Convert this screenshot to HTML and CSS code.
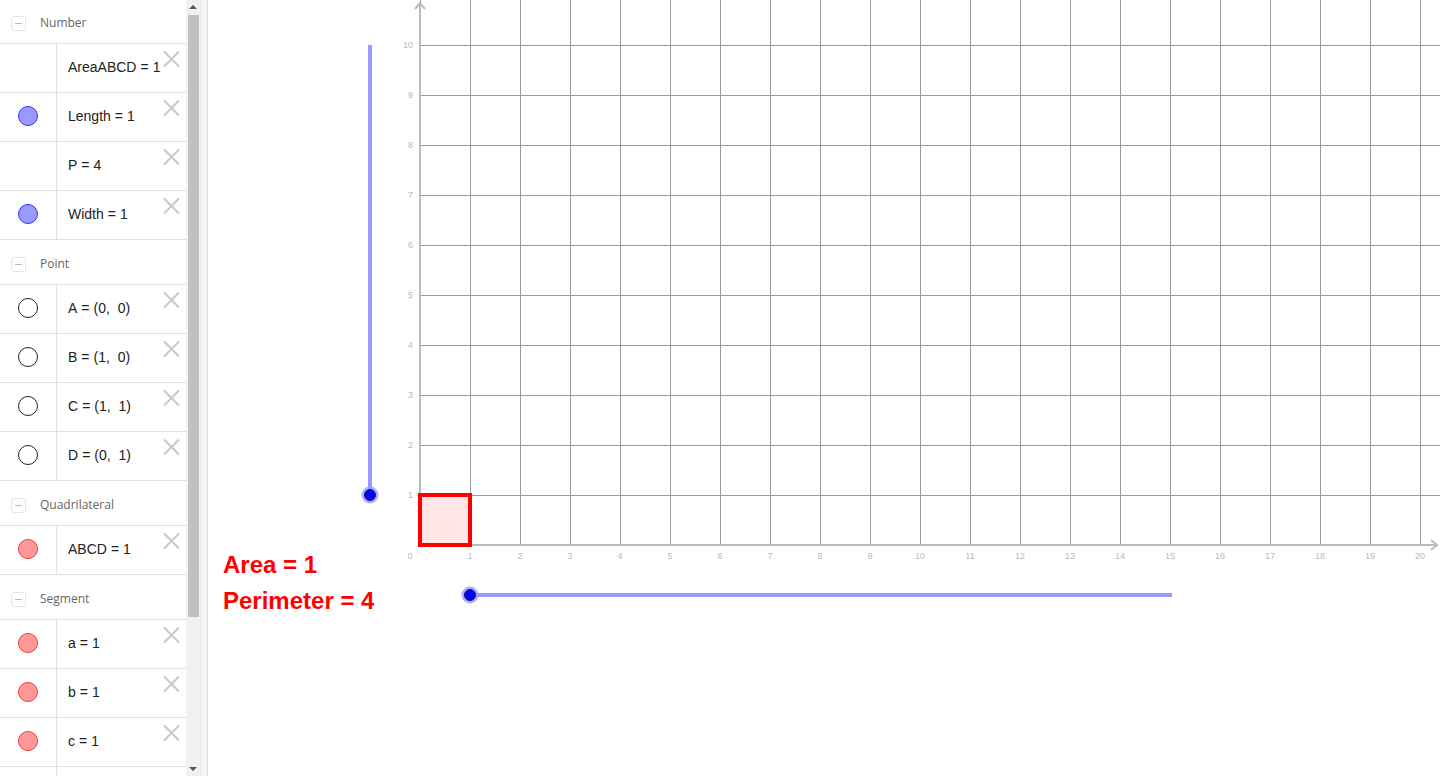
FILE: index.html
```html
<!DOCTYPE html>
<html lang="en">
<head>
    <meta charset="UTF-8">
    <title>Area and Perimeter</title>
    <link rel="stylesheet" href="styles.css">
</head>
<body>
<div class="algebra">
    <div class="av-list">
        <div class="group first">
            <span class="toggle"></span><span class="group-name">Number</span>
        </div>
        <div class="row"><div class="marble"></div><div class="formula">AreaABCD<span class="eq">=</span>1</div><span class="del"></span></div>
        <div class="row"><div class="marble"><span class="dot blue"></span></div><div class="formula">Length<span class="eq">=</span>1</div><span class="del"></span></div>
        <div class="row"><div class="marble"></div><div class="formula">P<span class="eq">=</span>4</div><span class="del"></span></div>
        <div class="row"><div class="marble"><span class="dot blue"></span></div><div class="formula">Width<span class="eq">=</span>1</div><span class="del"></span></div>

        <div class="group">
            <span class="toggle"></span><span class="group-name">Point</span>
        </div>
        <div class="row"><div class="marble"><span class="dot hollow"></span></div><div class="formula">A<span class="eq">=</span>(0, 0)</div><span class="del"></span></div>
        <div class="row"><div class="marble"><span class="dot hollow"></span></div><div class="formula">B<span class="eq">=</span>(1, 0)</div><span class="del"></span></div>
        <div class="row"><div class="marble"><span class="dot hollow"></span></div><div class="formula">C<span class="eq">=</span>(1, 1)</div><span class="del"></span></div>
        <div class="row"><div class="marble"><span class="dot hollow"></span></div><div class="formula">D<span class="eq">=</span>(0, 1)</div><span class="del"></span></div>

        <div class="group">
            <span class="toggle"></span><span class="group-name">Quadrilateral</span>
        </div>
        <div class="row"><div class="marble"><span class="dot red"></span></div><div class="formula">ABCD<span class="eq">=</span>1</div><span class="del"></span></div>

        <div class="group">
            <span class="toggle"></span><span class="group-name">Segment</span>
        </div>
        <div class="row"><div class="marble"><span class="dot red"></span></div><div class="formula">a<span class="eq">=</span>1</div><span class="del"></span></div>
        <div class="row"><div class="marble"><span class="dot red"></span></div><div class="formula">b<span class="eq">=</span>1</div><span class="del"></span></div>
        <div class="row"><div class="marble"><span class="dot red"></span></div><div class="formula">c<span class="eq">=</span>1</div><span class="del"></span></div>
        <div class="row"><div class="marble"></div><div class="formula"></div></div>
    </div>
    <div class="scrollbar">
        <div class="arrow up"></div>
        <div class="thumb"></div>
        <div class="track"></div>
        <div class="arrow down"></div>
    </div>
</div>
<div class="splitter"></div>

<div class="graphics">
    <svg width="1232" height="776" viewBox="208 0 1232 776" xmlns="http://www.w3.org/2000/svg">
        <defs>
            <pattern id="grid" patternUnits="userSpaceOnUse" x="420" y="45" width="50" height="50">
                <path d="M0.5 0 V50 M0 0.5 H50" fill="none" stroke="#9a9a9a" stroke-width="1"/>
            </pattern>
        </defs>
        <rect x="420" y="0" width="1020" height="545" fill="url(#grid)"/>

        <!-- axes -->
        <g stroke="#bbbbbb" stroke-width="2" fill="none">
            <path d="M420 546 V3"/>
            <path d="M415 9 L420 3 L425 9"/>
            <path d="M419 545 H1437"/>
            <path d="M1431 540 L1437 545 L1431 550"/>
        </g>

        <g class="tick" text-anchor="middle">
            <text x="410" y="559">0</text>
            <text x="470" y="559">1</text>
            <text x="520" y="559">2</text>
            <text x="570" y="559">3</text>
            <text x="620" y="559">4</text>
            <text x="670" y="559">5</text>
            <text x="720" y="559">6</text>
            <text x="770" y="559">7</text>
            <text x="820" y="559">8</text>
            <text x="870" y="559">9</text>
            <text x="920" y="559">10</text>
            <text x="970" y="559">11</text>
            <text x="1020" y="559">12</text>
            <text x="1070" y="559">13</text>
            <text x="1120" y="559">14</text>
            <text x="1170" y="559">15</text>
            <text x="1220" y="559">16</text>
            <text x="1270" y="559">17</text>
            <text x="1320" y="559">18</text>
            <text x="1370" y="559">19</text>
            <text x="1420" y="559">20</text>
        </g>
        <g class="tick" text-anchor="end">
            <text x="413" y="498">1</text>
            <text x="413" y="448">2</text>
            <text x="413" y="398">3</text>
            <text x="413" y="348">4</text>
            <text x="413" y="298">5</text>
            <text x="413" y="248">6</text>
            <text x="413" y="198">7</text>
            <text x="413" y="148">8</text>
            <text x="413" y="98">9</text>
            <text x="413" y="48">10</text>
        </g>

        <!-- square ABCD -->
        <rect x="420" y="495" width="50" height="50" fill="rgba(255,0,0,0.1)" stroke="#ff0000" stroke-width="4"/>

        <!-- sliders -->
        <line x1="370" y1="45" x2="370" y2="495" stroke="#9999ff" stroke-width="4"/>
        <circle cx="370" cy="495" r="8.5" fill="#9999ff" opacity="0.8"/>
        <circle cx="370" cy="495" r="5.5" fill="#0000ff" stroke="#1a1a40" stroke-width="1"/>

        <line x1="470" y1="595" x2="1172" y2="595" stroke="#9999ff" stroke-width="4"/>
        <circle cx="470" cy="595" r="8.5" fill="#9999ff" opacity="0.8"/>
        <circle cx="470" cy="595" r="5.5" fill="#0000ff" stroke="#1a1a40" stroke-width="1"/>

        <text class="result" x="223" y="573">Area = 1</text>
        <text class="result" x="223" y="609">Perimeter = 4</text>
    </svg>
</div>
</body>
</html>
```

FILE: styles.css
```css
body {
    margin: 0;
    display: flex;
    height: 776px;
    overflow: hidden;
    background: #fff;
    font-family: "Liberation Sans", Arial, sans-serif;
}

.algebra {
    width: 200px;
    display: flex;
    flex-shrink: 0;
}

.av-list {
    width: 186px;
    overflow: hidden;
}

.group {
    height: 45px;
    display: flex;
    align-items: center;
    padding-top: 4px;
    border-bottom: 1px solid #e0e0e0;
    box-sizing: border-box;
}

.group.first {
    height: 44px;
    padding-top: 3px;
}

.toggle {
    width: 13px;
    height: 13px;
    margin-left: 11px;
    margin-right: 14px;
    border: 1px solid #e4e4e4;
    border-radius: 3px;
    position: relative;
}

.toggle::after {
    content: "";
    position: absolute;
    left: 3px;
    right: 3px;
    top: 6px;
    height: 1px;
    background: #bbb;
}

.group-name {
    font-family: "Open Sans", sans-serif;
    font-size: 12px;
    color: #666;
    margin-bottom: 1px;
}

.row {
    height: 49px;
    box-sizing: border-box;
    display: flex;
    padding-bottom: 3px;
    border-bottom: 1px solid #e0e0e0;
    position: relative;
}

.marble {
    width: 56px;
    margin-bottom: -3px;
    padding-bottom: 3px;
    border-right: 1px solid #e0e0e0;
    display: flex;
    align-items: center;
    justify-content: center;
    flex-shrink: 0;
}

.dot {
    width: 20px;
    height: 20px;
    border-radius: 50%;
    box-sizing: border-box;
    border: 1px solid #000;
}

.dot.blue {
    background: #9999ff;
    border-color: #3333ff;
}

.dot.red {
    background: #ff9999;
    border-color: #ff3333;
}

.dot.hollow {
    background: #fff;
    border-color: #222;
}

.formula {
    display: flex;
    align-items: center;
    padding-left: 11px;
    font-size: 14px;
    color: #222;
    white-space: pre;
    word-spacing: 4px;
}

.eq {
    margin: 0 4px;
}

.del {
    position: absolute;
    right: 7px;
    top: 7px;
    width: 16px;
    height: 16px;
}

.del::before,
.del::after {
    content: "";
    position: absolute;
    left: -2px;
    top: 7px;
    width: 21px;
    height: 2px;
    background: #c8c8c8;
    transform: rotate(45deg);
}

.del::after {
    transform: rotate(-45deg);
}

.scrollbar {
    width: 14px;
    background: #f1f1f1;
    display: flex;
    flex-direction: column;
    align-items: center;
}

.arrow {
    height: 15px;
    width: 14px;
    position: relative;
}

.arrow::after {
    content: "";
    position: absolute;
    left: 3px;
    border-left: 4px solid transparent;
    border-right: 4px solid transparent;
}

.arrow.up::after {
    top: 5px;
    border-bottom: 4px solid #555;
}

.arrow.down::after {
    top: 6px;
    border-top: 4px solid #555;
}

.thumb {
    width: 11px;
    height: 602px;
    background: #c1c1c1;
}

.track {
    flex: 1;
}

.splitter {
    width: 8px;
    flex-shrink: 0;
    box-sizing: border-box;
    background: #f7f7f7;
    border-left: 1px solid #e6e6e6;
    border-right: 1px solid #dcdcdc;
}

.graphics {
    flex: 1;
    overflow: hidden;
}

.graphics svg {
    display: block;
}

.tick {
    font-family: "Liberation Sans", Arial, sans-serif;
    font-size: 9px;
    fill: #b8b8b8;
}

.result {
    font-family: "Liberation Sans", Arial, sans-serif;
    font-weight: bold;
    font-size: 24px;
    fill: #ff0000;
}
```
